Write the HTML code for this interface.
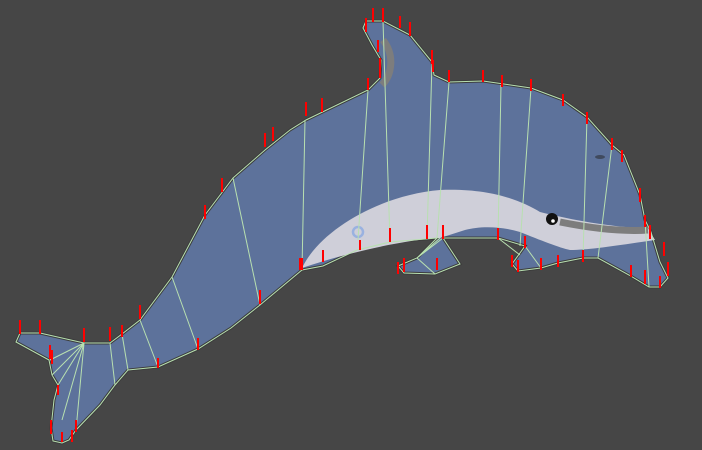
<!DOCTYPE html>
<html><head><style>
html,body{margin:0;padding:0;background:#464646;}
svg{display:block}
</style></head><body>
<svg width="702" height="450" viewBox="0 0 702 450" xmlns="http://www.w3.org/2000/svg">
<rect width="702" height="450" fill="#464646"/>
<path id="body" d="M366,21 L383,21 L410,35 L432,62 L434,75 L449,82 L483,81 L531,88 L563,100 L587,117 L612,145 L624,155 L640,195 L645,220 L651,232 L660,262 L668,278 L660,287 L649,287 L629,275 L598,258 L583,258 L558,263 L541,268 L518,271 L512,264 L525,246 L498,238 L443,238 L460,264 L435,274 L404,273 L398,266 L417,258 L437,238 L390,242 L357,250 L323,266 L302,270 L260,305 L231,328 L198,349 L158,367 L128,370 L115,385 L100,405 L76,430 L69,440 L62,443 L53,441 L51,428 L54,400 L58,385 L52,375 L49,360 L16,342 L20,333 L40,333 L84,343 L110,343 L122,334 L140,320 L172,277 L205,215 L233,178 L265,150 L290,130 L306,120 L368,90 L380,78 L381,60 L372,45 L363,28 Z" fill="#5d729b" stroke="#3c3c3c" stroke-width="3"/>
<path d="M302,268 C320,230 380,195 440,190 C490,188 520,200 540,212 C580,222 620,228 648,228 L655,240 C620,245 590,250 570,250 C560,248 540,240 520,232 C500,226 480,226 465,230 L440,238 C400,240 340,255 302,268Z" fill="#cfcfd9"/>
<path d="M560,222 C590,228 620,232 648,230" stroke="#7d7d7d" stroke-width="7" fill="none"/>
<path d="M383,40 C395,55 392,75 382,85" stroke="#7d7d7d" stroke-width="7" fill="none"/>
<ellipse cx="600" cy="157" rx="5" ry="2" fill="#404a5e"/>
<circle cx="552" cy="219" r="6" fill="#111"/><circle cx="553" cy="221" r="1.8" fill="#fff"/>
<circle cx="358" cy="232" r="5" fill="none" stroke="#9ab2e0" stroke-width="2.5"/>
<g stroke="#b8e0b0" stroke-width="1" fill="none">
<path d="M366,21 L383,21 L410,35 L432,62 L434,75 L449,82 L483,81 L531,88 L563,100 L587,117 L612,145 L624,155 L640,195 L645,220 L651,232 L660,262 L668,278 L660,287 L649,287 L629,275 L598,258 L583,258 L558,263 L541,268 L518,271 L512,264 L525,246 L498,238 L443,238 L460,264 L435,274 L404,273 L398,266 L417,258 L437,238 L390,242 L357,250 L323,266 L302,270 L260,305 L231,328 L198,349 L158,367 L128,370 L115,385 L100,405 L76,430 L69,440 L62,443 L53,441 L51,428 L54,400 L58,385 L52,375 L49,360 L16,342 L20,333 L40,333 L84,343 L110,343 L122,334 L140,320 L172,277 L205,215 L233,178 L265,150 L290,130 L306,120 L368,90 L380,78 L381,60 L372,45 L363,28 Z"/>
<path d="M305,120 L302,270 M368,90 L358,240 M383,21 L390,242 M432,62 L427,238 M449,82 L437,238 M501,85 L498,238 M531,88 L520,246 M587,117 L583,258 M612,145 L598,258 M645,220 L649,287 M233,178 L260,305 M172,277 L198,349 M140,320 L158,367 M122,334 L128,370 M110,343 L115,385 M84,343 L76,430 M84,343 L52,375 M84,343 L58,385 M84,343 L50,360 M84,343 L62,420 M443,238 L417,258 L435,274 M525,246 L541,268 M417,258 L440,238 M498,238 L520,255"/>
</g>
<g stroke="#ff0000" stroke-width="2">
<path d="M366,18 v14 M373,8 v14 M383,8 v14 M400,16 v12 M410,22 v14 M432,50 v14 M433,60 v12 M449,70 v12 M483,70 v12 M502,75 v12 M531,79 v12 M563,94 v12 M587,112 v12 M612,138 v12 M622,150 v12 M640,188 v14 M645,215 v12 M650,225 v14 M664,242 v14 M668,262 v14 M660,276 v12 M645,270 v14 M631,265 v12 M583,250 v12 M558,255 v12 M541,258 v12 M518,260 v12 M512,255 v12 M525,236 v12 M498,228 v12 M443,225 v14 M427,225 v14 M437,258 v12 M404,258 v14 M398,262 v12 M390,228 v14 M360,240 v10 M323,250 v12 M302,258 v12 M300,258 v12 M260,290 v14 M198,338 v12 M158,358 v10 M140,305 v14 M122,325 v12 M110,327 v14 M84,328 v14 M40,320 v14 M20,320 v14 M52,350 v14 M50,345 v14 M58,385 v10 M51,420 v14 M62,432 v10 M72,430 v12 M76,420 v12 M205,205 v14 M222,178 v14 M265,133 v14 M273,127 v14 M306,102 v14 M322,98 v14 M368,78 v12 M380,66 v12 M380,58 v12 M378,40 v12"/>
</g>
</svg>
</body></html>
